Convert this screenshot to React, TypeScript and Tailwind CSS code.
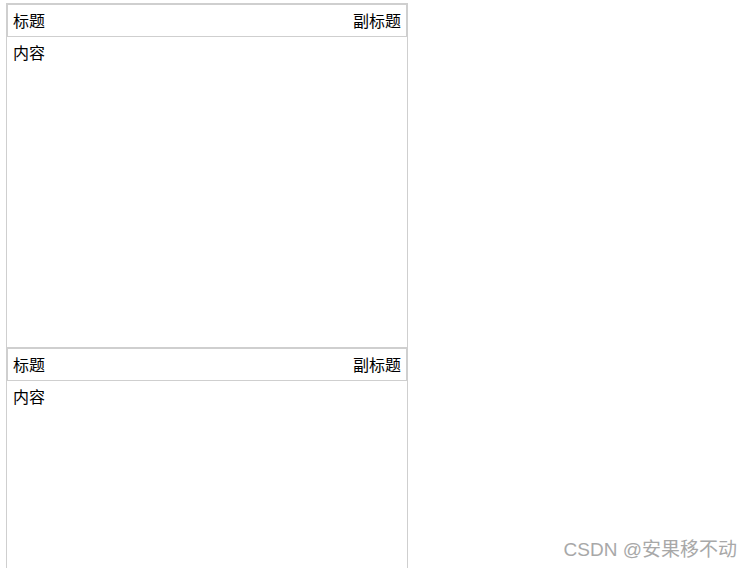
import React from "react";

function Panel() {
  return (
    <div className="w-[402px] shrink-0">
      <div className="h-[34px] border-t-2 border-x-2 border-b border-[#cfcfcf] flex items-center justify-between pl-[5px] pr-[5px] pb-[1px] text-[16px] leading-[20px] text-black">
        <span>标题</span>
        <span>副标题</span>
      </div>
      <div className="h-[310px] border-x border-[#cfcfcf] pl-[6px] pt-[5px] text-[16px] leading-[20px] text-black">
        内容
      </div>
    </div>
  );
}

export default function App() {
  return (
    <div
      className="relative w-[751px] h-[568px] overflow-hidden bg-white pl-[6px] pt-[3px] flex flex-col"
      style={{ fontFamily: '"Noto Sans CJK SC", "Noto Sans", sans-serif' }}
    >
      <Panel />
      <Panel />
      <div
        className="absolute right-[14px] bottom-[9px] text-[19px] text-[#a8a8a8] leading-none"
        style={{ fontFamily: '"Liberation Sans", "Noto Sans CJK SC", sans-serif' }}
      >
        CSDN @安果移不动
      </div>
    </div>
  );
}
